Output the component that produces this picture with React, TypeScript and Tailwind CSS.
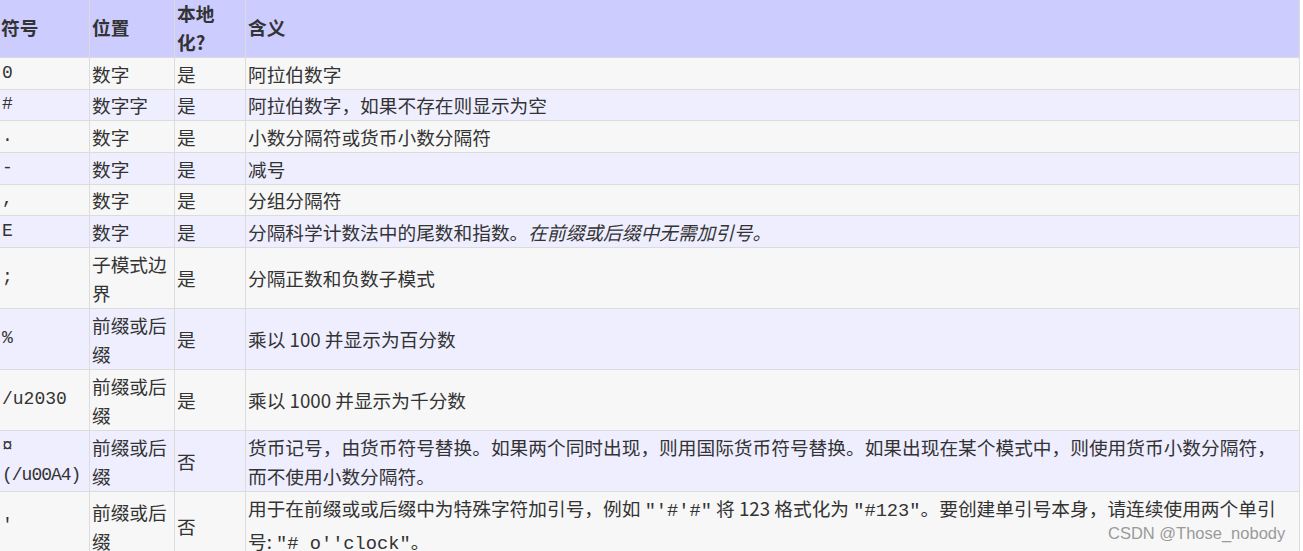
import React from "react";

const sans = "font-['Noto_Sans_CJK_SC','Noto_Sans',sans-serif]";
const mono = "font-['Liberation_Mono','Noto_Sans_CJK_SC',monospace]";

type Row = {
  sym: React.ReactNode;
  pos: string;
  loc: string;
  desc: React.ReactNode;
};

const M = ({ children }: { children: React.ReactNode }) => (
  <span className={mono}>{children}</span>
);

const rows: Row[] = [
  { sym: "0", pos: "数字", loc: "是", desc: "阿拉伯数字" },
  { sym: "#", pos: "数字字", loc: "是", desc: "阿拉伯数字，如果不存在则显示为空" },
  { sym: ".", pos: "数字", loc: "是", desc: "小数分隔符或货币小数分隔符" },
  { sym: "-", pos: "数字", loc: "是", desc: "减号" },
  { sym: ",", pos: "数字", loc: "是", desc: "分组分隔符" },
  {
    sym: "E",
    pos: "数字",
    loc: "是",
    desc: (
      <>
        分隔科学计数法中的尾数和指数。<i>在前缀或后缀中无需加引号。</i>
      </>
    ),
  },
  { sym: ";", pos: "子模式边界", loc: "是", desc: "分隔正数和负数子模式" },
  { sym: "%", pos: "前缀或后缀", loc: "是", desc: "乘以 100 并显示为百分数" },
  { sym: "/u2030", pos: "前缀或后缀", loc: "是", desc: "乘以 1000 并显示为千分数" },
  {
    sym: (
      <>
        ¤<br />
        <span className="tracking-[-1px]">(/u00A4)</span>
      </>
    ),
    pos: "前缀或后缀",
    loc: "否",
    desc: (
      <>
        货币记号，由货币符号替换。如果两个同时出现，则用国际货币符号替换。如果出现在某个模式中，则使用货币小数分隔符，
        <br />
        而不使用小数分隔符。
      </>
    ),
  },
  {
    sym: "'",
    pos: "前缀或后缀",
    loc: "否",
    desc: (
      <>
        用于在前缀或或后缀中为特殊字符加引号，例如 <M>"'#'#"</M> 将 123 格式化为 <M>"#123"</M>。要创建单引号本身，请连续使用两个单引
        <br />
        号: <M>"# o''clock"</M>。
      </>
    ),
  },
];

export default function App() {
  return (
    <div className={`relative w-[1303px] h-[551px] overflow-hidden bg-white ${sans}`}>
      <table className="table-fixed border-collapse w-[1300px] ml-[-1px] mt-[-4px] text-[18.7px] leading-[29.3px] text-[#333]">
        <colgroup>
          <col className="w-[90px]" />
          <col className="w-[85px]" />
          <col className="w-[71px]" />
          <col className="w-[1054px]" />
        </colgroup>
        <thead>
          <tr className="bg-[#ccccff]">
            <th className="border border-[#dcdcdc] px-[1px] py-[0.7px] text-left align-middle font-bold">符号</th>
            <th className="border border-[#dcdcdc] px-[2px] py-[0.7px] text-left align-middle font-bold">位置</th>
            <th className="border border-[#dcdcdc] px-[2px] py-[0.7px] text-left align-middle font-bold">
              本地
              <br />
              化?
            </th>
            <th className="border border-[#dcdcdc] px-[2px] py-[0.7px] text-left align-middle font-bold">含义</th>
          </tr>
        </thead>
        <tbody>
          {rows.map((r, i) => (
            <tr key={i} className={i % 2 === 0 ? "bg-[#f7f7f7]" : "bg-[#eeeeff]"}>
              <td className={`border border-[#dcdcdc] px-[2px] py-[0.7px] align-middle whitespace-nowrap ${mono} text-[18px]`}>
                {r.sym}
              </td>
              <td className="border border-[#dcdcdc] px-[2px] py-[0.7px] align-middle">{r.pos}</td>
              <td className="border border-[#dcdcdc] px-[2px] py-[0.7px] align-middle">{r.loc}</td>
              <td className="border border-[#dcdcdc] px-[2px] py-[0.7px] align-middle whitespace-nowrap">{r.desc}</td>
            </tr>
          ))}
        </tbody>
      </table>
      <div className="absolute left-[1108px] top-[523px] text-[16.5px] leading-[20px] text-[#9a9a9a] font-['Liberation_Sans',sans-serif]">
        CSDN @Those_nobody
      </div>
    </div>
  );
}
